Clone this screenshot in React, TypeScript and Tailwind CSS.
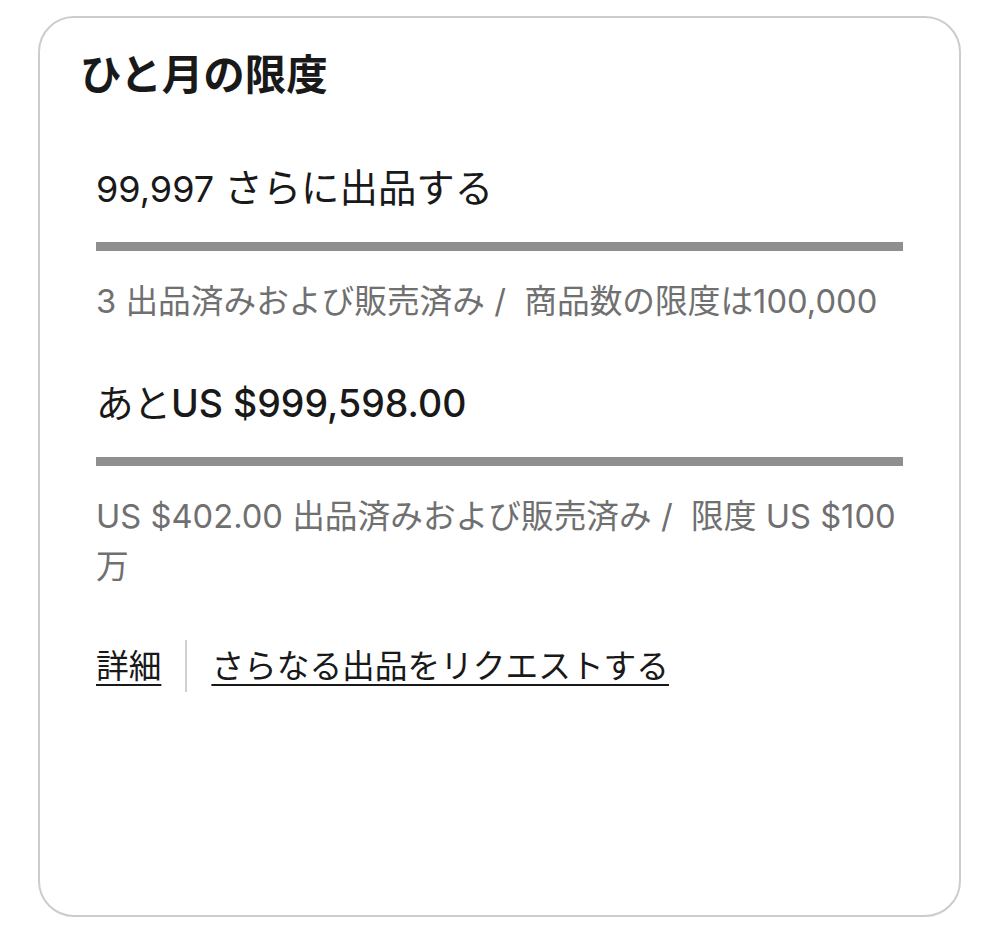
export default function App() {
  const font = { fontFamily: 'Inter, "Noto Sans CJK JP", sans-serif' };
  return (
    <div className="w-[999px] h-[949px] bg-white pt-[16px] pl-[38px]" style={font}>
      <div className="w-[923px] h-[901px] border-2 border-[#cccccc] rounded-[36px] px-[40px] pt-[33px]">
        <h2 className="text-[41.5px] leading-[48px] font-bold text-[#191919]">ひと月の限度</h2>
        <div className="px-4">
          <div className="mt-[67px] text-[36px] leading-[44px] text-[#191919]">
            99,997 <span className="text-[38.4px]">さらに出品する</span>
          </div>
          <div className="mt-[31px] h-[9px] bg-[#8f8f8f]" />
          <div className="mt-[25px] text-[32.7px] leading-[50px] text-[#707070]">3 出品済みおよび販売済み /&nbsp; 商品数の限度は100,000</div>
          <div className="mt-[56px] text-[37.5px] leading-[44px] text-[#191919]">
            あと<span className="font-medium">US $999,598.00</span>
          </div>
          <div className="mt-[31px] h-[9px] bg-[#8f8f8f]" />
          <div className="mt-[25px] text-[32.7px] leading-[50px] text-[#707070]">US $402.00 出品済みおよび販売済み /&nbsp; 限度 US $100万</div>
          <div className="mt-[49px] flex items-center text-[32.7px] leading-[50px] text-[#191919]">
            <a href="#" className="underline decoration-2 underline-offset-[6px]">詳細</a>
            <span className="mx-[24px] w-[2px] h-[52px] bg-[#d0d0d0]" />
            <a href="#" className="underline decoration-2 underline-offset-[6px]">さらなる出品をリクエストする</a>
          </div>
        </div>
      </div>
    </div>
  );
}
